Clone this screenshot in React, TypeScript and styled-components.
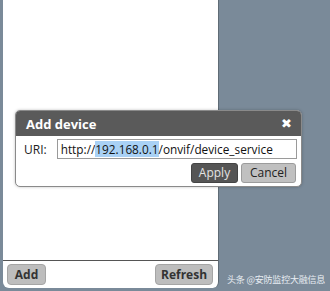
import React from "react";
import styled, { createGlobalStyle } from "styled-components";

const Global = createGlobalStyle`
  html, body { margin: 0; padding: 0; }
  body {
    background: #7a8a99;
    font-family: "Open Sans", "DejaVu Sans", sans-serif;
    width: 330px;
    height: 291px;
    overflow: hidden;
  }
`;

const Page = styled.div`
  position: relative;
  width: 330px;
  height: 291px;
  display: flex;
  align-items: flex-start;
  padding-left: 3px;
  box-sizing: border-box;
`;

const Panel = styled.div`
  width: 216px;
  height: 288px;
  background: #fff;
  border-right: 1px solid #5f6b75;
  border-radius: 0 0 6px 6px;
  display: flex;
  flex-direction: column;
  box-sizing: border-box;
`;

const PanelBody = styled.div`
  flex: 1;
`;

const Footer = styled.div`
  box-sizing: border-box;
  border-top: 1px solid #555;
  height: 28px;
  display: flex;
  justify-content: space-between;
  align-items: flex-start;
  padding: 3px 5px 0 4px;
`;

const GrayButton = styled.button<{ $w: number }>`
  width: ${(p) => p.$w}px;
  height: 21px;
  background: #bdbdbd;
  border: 1px solid #a5a5a5;
  border-radius: 4px;
  font-family: "Open Sans", "DejaVu Sans", sans-serif;
  font-weight: 700;
  font-size: 12px;
  color: #333;
  padding: 0;
  line-height: 19px;
`;

const Dialog = styled.div`
  position: absolute;
  left: 15px;
  top: 110px;
  width: 287px;
  height: 77px;
  background: #fff;
  border: 1px solid #8a8a8a;
  border-radius: 5px;
  overflow: hidden;
  box-sizing: border-box;
  box-shadow: 0 0 3px rgba(0, 0, 0, 0.25);
  display: flex;
  flex-direction: column;
`;

const Header = styled.div`
  height: 25px;
  background: #5a5a5a;
  display: flex;
  align-items: center;
  justify-content: space-between;
  padding: 0 9px 0 10px;
  color: #fff;
  font-weight: 700;
  font-size: 13px;
`;

const Close = styled.span`
  font-size: 13px;
  line-height: 1;
`;

const Body = styled.div`
  display: flex;
  flex-direction: column;
  padding: 3px 3px 0 8px;
  gap: 4px;
`;

const Row = styled.div`
  display: flex;
  align-items: center;
  gap: 10px;
`;

const Label = styled.span`
  font-size: 12px;
  color: #222;
`;

const Input = styled.div`
  width: 240px;
  height: 20px;
  box-sizing: border-box;
  border: 1px solid #9a9a9a;
  font-size: 11.8px;
  color: #111;
  line-height: 18px;
  padding-left: 3px;
  white-space: nowrap;
  overflow: hidden;
`;

const Sel = styled.span`
  background: #a9d1f5;
`;

const Actions = styled.div`
  display: flex;
  justify-content: flex-end;
  gap: 3px;
  padding-right: 2px;
`;

const DlgButton = styled.button<{ $dark?: boolean; $w: number }>`
  width: ${(p) => p.$w}px;
  height: 20px;
  border-radius: 3px;
  border: 1px solid ${(p) => (p.$dark ? "#444" : "#9c9c9c")};
  background: ${(p) => (p.$dark ? "#555" : "#c0c0c0")};
  color: ${(p) => (p.$dark ? "#e4e4e4" : "#222")};
  font-family: "Open Sans", "DejaVu Sans", sans-serif;
  font-size: 12px;
  padding: 0;
  line-height: 18px;
`;

const Watermark = styled.div`
  position: absolute;
  left: 227px;
  top: 273px;
  font-family: "Noto Sans CJK SC", sans-serif;
  font-size: 9px;
  color: #e8edf2;
  white-space: nowrap;
  letter-spacing: -0.2px;
`;

export default function App() {
  return (
    <>
      <Global />
      <Page>
        <Panel>
          <PanelBody />
          <Footer>
            <GrayButton $w={39}>Add</GrayButton>
            <GrayButton $w={58}>Refresh</GrayButton>
          </Footer>
        </Panel>
        <Dialog>
          <Header>
            <span>Add device</span>
            <Close>✖</Close>
          </Header>
          <Body>
            <Row>
              <Label>URI:</Label>
              <Input>
                http://<Sel>192.168.0.1</Sel>/onvif/device_service
              </Input>
            </Row>
            <Actions>
              <DlgButton $dark $w={47}>Apply</DlgButton>
              <DlgButton $w={55}>Cancel</DlgButton>
            </Actions>
          </Body>
        </Dialog>
        <Watermark>头条 @安防监控大融信息</Watermark>
      </Page>
    </>
  );
}
